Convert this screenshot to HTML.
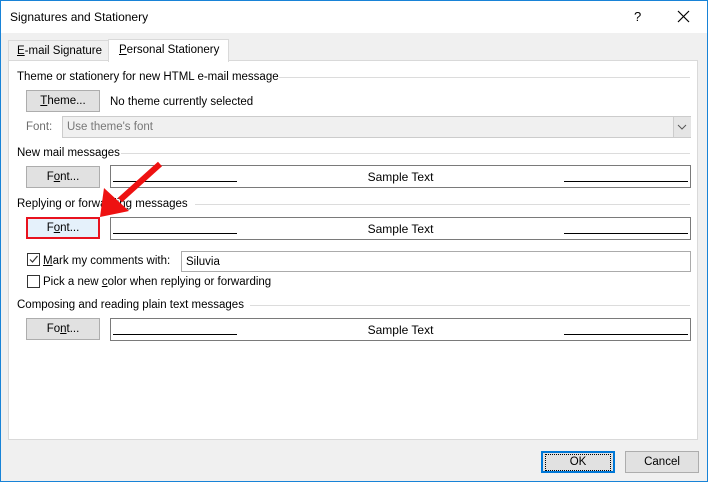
<!DOCTYPE html>
<html><head><style>
body{margin:0;width:708px;height:482px;overflow:hidden;font-family:"Liberation Sans",sans-serif;font-size:11.5px;color:#000;background:#fff}
.win{position:absolute;left:0;top:0;width:706px;height:480px;border:1px solid #1883d7;background:#f0f0f0}
.a{position:absolute;white-space:nowrap}
.tb{position:absolute;left:0;top:0;width:706px;height:32px;background:#fff}
.btn{position:absolute;background:#e1e1e1;border:1px solid #adadad;text-align:center;box-sizing:border-box;line-height:21px}
.line{position:absolute;height:1px;background:#dcdcdc}
.sb{position:absolute;left:109px;width:581px;height:23px;box-sizing:border-box;border:1px solid #7a7a7a;background:#fff;text-align:center;line-height:22px;font-size:12px}
.sb i{position:absolute;top:15px;height:1px;background:#000;width:124px}
.cb{position:absolute;width:11px;height:11px;border:1px solid #333;background:#fff}
u{text-decoration:underline}
</style></head><body>
<div class="win">
<div class="tb"></div>
<div class="a" style="left:9px;top:9px;font-size:12px">Signatures and Stationery</div>
<div class="a" style="left:633px;top:8px;font-size:13px">?</div>
<svg class="a" style="left:676px;top:9px" width="13" height="13"><path d="M1 1L12 12M12 1L1 12" stroke="#000" stroke-width="1.2"/></svg>
<div class="a" style="left:7px;top:59px;width:690px;height:380px;background:#fff;border:1px solid #d9d9d9;box-sizing:border-box"></div>
<div class="a" style="left:7px;top:39px;width:101px;height:20px;border:1px solid #d9d9d9;border-bottom:none;box-sizing:border-box;background:#f0f0f0"></div>
<div class="a" style="left:16px;top:44px"><u>E</u>-mail Signature</div>
<div class="a" style="left:107px;top:38px;width:121px;height:23px;border:1px solid #d9d9d9;border-bottom:none;box-sizing:border-box;background:#fff"></div>
<div class="a" style="left:118px;top:43px"><u>P</u>ersonal Stationery</div>

<div class="a" style="left:16px;top:70px">Theme or stationery for new HTML e-mail message</div>
<div class="line" style="left:278px;top:76px;width:411px"></div>
<div class="btn" style="left:25px;top:89px;width:74px;height:22px"><u>T</u>heme...</div>
<div class="a" style="left:109px;top:95px">No theme currently selected</div>
<div class="a" style="left:25px;top:120px;color:#6d6d6d">Font:</div>
<div class="a" style="left:61px;top:115px;width:629px;height:22px;border:1px solid #ccc;box-sizing:border-box;background:#f0f0f0;color:#777;padding-left:4px;line-height:21px">Use theme's font</div>
<div class="a" style="left:672px;top:116px;width:17px;height:20px;background:#e5e5e5;border-left:1px solid #ccc"></div>
<svg class="a" style="left:676px;top:123px" width="10" height="6"><path d="M1 1L5 5L9 1" stroke="#555" fill="none"/></svg>

<div class="a" style="left:16px;top:146px">New mail messages</div>
<div class="line" style="left:120px;top:152px;width:569px"></div>
<div class="btn" style="left:25px;top:165px;width:74px;height:22px">F<u>o</u>nt...</div>
<div class="sb" style="top:164px">Sample Text<i style="left:2px"></i><i style="right:2px"></i></div>

<div class="a" style="left:16px;top:197px">Replying or forwarding messages</div>
<div class="line" style="left:194px;top:203px;width:495px"></div>
<div class="btn" style="left:25px;top:216px;width:74px;height:22px;background:#e5f1fb;border:2px solid #e8121e;line-height:19px">F<u>o</u>nt...</div>
<div class="sb" style="top:216px">Sample Text<i style="left:2px"></i><i style="right:2px"></i></div>

<div class="cb" style="left:26px;top:252px"></div>
<svg class="a" style="left:27px;top:253px" width="11" height="11"><path d="M2 5.5L4.5 8L9.5 2" stroke="#333" fill="none" stroke-width="1.2"/></svg>
<div class="a" style="left:42px;top:254px"><u>M</u>ark my comments with:</div>
<div class="a" style="left:180px;top:250px;width:510px;height:21px;border:1px solid #ababab;box-sizing:border-box;background:#fff;padding-left:4px;line-height:20px">Siluvia</div>
<div class="cb" style="left:26px;top:274px"></div>
<div class="a" style="left:42px;top:275px">Pick a new <u>c</u>olor when replying or forwarding</div>

<div class="a" style="left:16px;top:298px">Composing and reading plain text messages</div>
<div class="line" style="left:249px;top:304px;width:440px"></div>
<div class="btn" style="left:25px;top:317px;width:74px;height:22px">Fo<u>n</u>t...</div>
<div class="sb" style="top:317px">Sample Text<i style="left:2px"></i><i style="right:2px"></i></div>

<div class="btn" style="left:540px;top:450px;width:74px;height:22px;border:2px solid #0078d7;line-height:19px"><span style="outline:1px dotted #000;display:inline-block;width:64px;line-height:15px">OK</span></div>
<div class="btn" style="left:624px;top:450px;width:74px;height:22px">Cancel</div>

<svg class="a" style="left:0;top:0" width="706" height="480"><path d="M159 163L119 199" stroke="#ee1111" stroke-width="6"/><polygon points="99,216 103,187 128,210" fill="#ee1111"/></svg>
</div>
</body></html>
